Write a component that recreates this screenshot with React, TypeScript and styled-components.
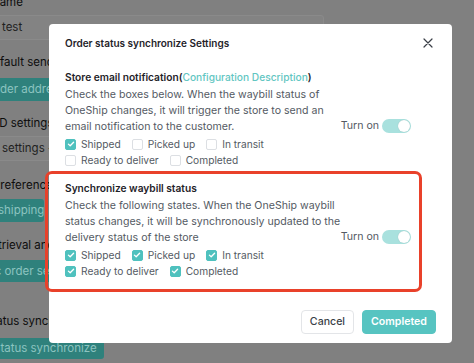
import styled, { createGlobalStyle } from 'styled-components';

const GlobalStyle = createGlobalStyle`
  html, body {
    margin: 0;
    padding: 0;
  }
  body {
    font-family: Inter, "Liberation Sans", sans-serif;
    background: #808080;
    overflow: hidden;
  }
`;

const CheckIcon = () => (
	<svg width="8" height="8" viewBox="0 0 8 8">
		<path d="M1.4 4.1 L3.2 5.8 L6.6 2.2" fill="none" stroke="#fff" strokeWidth="1.3" strokeLinecap="round" strokeLinejoin="round" />
	</svg>
);

const CloseIcon = () => (
	<svg width="10" height="10" viewBox="0 0 10 10">
		<path d="M1 1 L9 9 M9 1 L1 9" stroke="#3a3f47" strokeWidth="1.2" strokeLinecap="round" />
	</svg>
);

type Status = { label: string; checked: boolean };

const emailRows: Status[][] = [
	[
		{ label: 'Shipped', checked: true },
		{ label: 'Picked up', checked: false },
		{ label: 'In transit', checked: false },
	],
	[
		{ label: 'Ready to deliver', checked: false },
		{ label: 'Completed', checked: false },
	],
];

const syncRows: Status[][] = [
	[
		{ label: 'Shipped', checked: true },
		{ label: 'Picked up', checked: true },
		{ label: 'In transit', checked: true },
	],
	[
		{ label: 'Ready to deliver', checked: true },
		{ label: 'Completed', checked: true },
	],
];

const StatusChecks = ({ rows }: { rows: Status[][] }) => (
	<Checks>
		{rows.map((row, i) => (
			<CheckRow key={i}>
				{row.map((s) => (
					<CheckItem key={s.label}>
						<Box $checked={s.checked}>{s.checked && <CheckIcon />}</Box>
						<span>{s.label}</span>
					</CheckItem>
				))}
			</CheckRow>
		))}
	</Checks>
);

const TurnOn = () => (
	<Switcher>
		Turn on
		<Track>
			<Knob />
		</Track>
	</Switcher>
);

export default function App() {
	return (
		<>
			<GlobalStyle />
			<Screen>
				<Form>
					<FieldLabel $gap={-6} $shift={-9}>Name</FieldLabel>
					<Input $gap={5}>test</Input>
					<FieldLabel $gap={14} $shift={-15}>Default sender</FieldLabel>
					<FormButton $gap={8} $height={23} $shift={-13}>Order address</FormButton>
					<FieldLabel $gap={14} $shift={-18}>COD settings</FieldLabel>
					<Input $gap={5}>settings - default</Input>
					<FieldLabel $gap={16} $shift={-7}>Preference</FieldLabel>
					<FormButton $gap={6} $height={23} $shift={-2} $width={44}>shipping</FormButton>
					<FieldLabel $gap={15} $shift={-16}>Retrieval and sync</FieldLabel>
					<FormButton $gap={7} $height={22} $shift={-26}>Sync order settings</FormButton>
					<FieldLabel $gap={31} $shift={-15}>Status synchronize</FieldLabel>
					<FormButton $gap={9} $height={21} $shift={-7} $width={104}>Status synchronize</FormButton>
				</Form>

				<Modal>
					<Header>
						<Title>Order status synchronize Settings</Title>
						<Close>
							<CloseIcon />
						</Close>
					</Header>
					<Body>
						<Section>
							<Content>
								<SectionTitle>
									Store email notification(<Link>Configuration Description</Link>)
								</SectionTitle>
								<Desc>
									Check the boxes below. When the waybill status of
									<br />
									OneShip changes, it will trigger the store to send an
									<br />
									email notification to the customer.
								</Desc>
								<StatusChecks rows={emailRows} />
							</Content>
							<TurnOn />
						</Section>
						<Section $marked>
							<Content>
								<SectionTitle>Synchronize waybill status</SectionTitle>
								<Desc>
									Check the following states. When the OneShip waybill
									<br />
									status changes, it will be synchronously updated to the
									<br />
									delivery status of the store
								</Desc>
								<StatusChecks rows={syncRows} />
							</Content>
							<TurnOn />
						</Section>
					</Body>
					<Footer>
						<Button>Cancel</Button>
						<Button $primary>Completed</Button>
					</Footer>
				</Modal>
			</Screen>
		</>
	);
}

const Screen = styled.div`
	position: relative;
	width: 474px;
	height: 363px;
	overflow: hidden;
	background: #808080;
`;

const Form = styled.div`
	display: flex;
	flex-direction: column;
	align-items: flex-start;
	width: 340px;
	font-size: 11.5px;
	color: #0d0d0d;
`;

const FieldLabel = styled.div<{ $gap: number; $shift: number }>`
	height: 16px;
	line-height: 16px;
	margin-top: ${(p) => p.$gap}px;
	margin-left: ${(p) => p.$shift}px;
	white-space: nowrap;
`;

const Input = styled.div<{ $gap: number }>`
	box-sizing: border-box;
	width: 335px;
	height: 25px;
	margin-top: ${(p) => p.$gap}px;
	margin-left: -11px;
	padding-left: 12px;
	line-height: 23px;
	border: 1px solid #8a8a8a;
	border-radius: 3px;
	background: #838383;
	color: #1f1f1f;
	white-space: nowrap;
`;

const FormButton = styled.div<{ $gap: number; $height: number; $shift: number; $width?: number }>`
	box-sizing: border-box;
	height: ${(p) => p.$height}px;
	margin-top: ${(p) => p.$gap}px;
	margin-left: ${(p) => p.$shift - 10}px;
	padding: 0 12px 0 10px;
	width: ${(p) => (p.$width ? `${p.$width + 10 - p.$shift}px` : 'auto')};
	line-height: ${(p) => p.$height}px;
	border-radius: 3px;
	background: #2f817c;
	color: #8cc4c0;
	white-space: nowrap;
	overflow: hidden;
`;

const Modal = styled.div`
	position: absolute;
	left: 49px;
	top: 24px;
	width: 403px;
	height: 319px;
	box-sizing: border-box;
	background: #fff;
	border-radius: 4px;
	display: flex;
	flex-direction: column;
`;

const Header = styled.div`
	height: 38px;
	display: flex;
	align-items: center;
	justify-content: space-between;
	padding: 0 19px 0 16px;
`;

const Title = styled.div`
	font-size: 10px;
	font-weight: 600;
	color: #1f2329;
`;

const Close = styled.div`
	display: flex;
	width: 10px;
	height: 10px;
`;

const Body = styled.div`
	padding: 5px 16px 0;
	display: flex;
	flex-direction: column;
`;

const Section = styled.div<{ $marked?: boolean }>`
	display: flex;
	justify-content: space-between;
	align-items: center;
	padding-right: 25px;
	${(p) =>
		p.$marked &&
		`
		margin: 3px 14px 0 -20px;
		padding: 4px 8px 10px 17px;
		border: 3px solid #e9412a;
		border-radius: 7px;
	`}
`;

const Content = styled.div`
	display: flex;
	flex-direction: column;
`;

const SectionTitle = styled.div`
	font-size: 10.2px;
	font-weight: 600;
	line-height: 20px;
	color: #1f2329;
	white-space: nowrap;
`;

const Link = styled.span`
	color: #62c6c2;
	font-weight: 500;
`;

const Desc = styled.div`
	font-size: 10.6px;
	line-height: 16px;
	color: #545a63;
	white-space: nowrap;
`;

const Checks = styled.div`
	display: flex;
	flex-direction: column;
	margin-top: 1px;
`;

const CheckRow = styled.div`
	display: flex;
	align-items: center;
	height: 16px;
`;

const CheckItem = styled.label`
	display: flex;
	align-items: center;
	gap: 5px;
	margin-right: 11px;
	font-size: 10.2px;
	line-height: 16px;
	color: #545a63;
`;

const Box = styled.span<{ $checked: boolean }>`
	box-sizing: border-box;
	display: flex;
	align-items: center;
	justify-content: center;
	width: 11px;
	height: 11px;
	border-radius: 2px;
	background: ${(p) => (p.$checked ? '#4fc1be' : '#fff')};
	border: 1px solid ${(p) => (p.$checked ? '#4fc1be' : '#dcdfe3')};
`;

const Switcher = styled.div`
	display: flex;
	align-items: center;
	gap: 3px;
	margin-top: 16px;
	font-size: 10.6px;
	color: #545a63;
`;

const Track = styled.div`
	position: relative;
	width: 29px;
	height: 14px;
	border-radius: 7px;
	background: #a9e1de;
`;

const Knob = styled.div`
	position: absolute;
	right: 1px;
	top: 1px;
	width: 12px;
	height: 12px;
	border-radius: 50%;
	background: #fff;
	box-shadow: 0 0 1px rgba(0, 0, 0, 0.2);
`;

const Footer = styled.div`
	display: flex;
	justify-content: flex-end;
	gap: 8px;
	padding: 18px 16px 0;
`;

const Button = styled.div<{ $primary?: boolean }>`
	box-sizing: border-box;
	height: 24px;
	padding: 0 8px;
	line-height: 22px;
	border-radius: 4px;
	font-size: 10.6px;
	font-weight: ${(p) => (p.$primary ? 600 : 500)};
	color: ${(p) => (p.$primary ? '#fff' : '#3a3f47')};
	background: ${(p) => (p.$primary ? '#57c4c1' : '#fff')};
	border: 1px solid ${(p) => (p.$primary ? '#57c4c1' : '#e3e5e8')};
`;
